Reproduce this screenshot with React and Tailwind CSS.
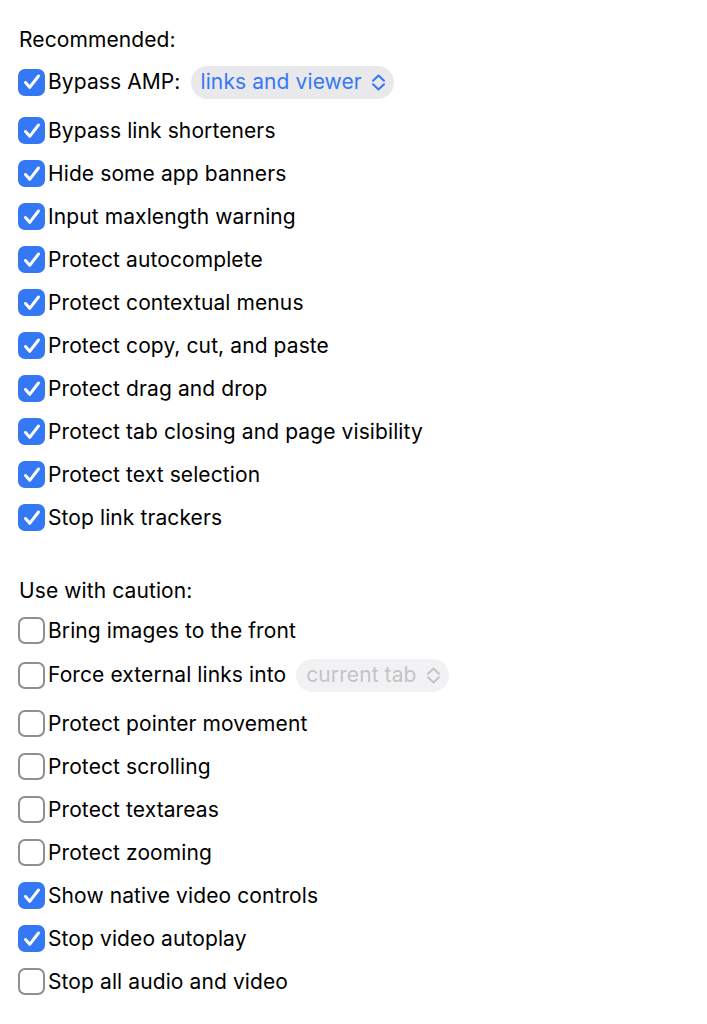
import React from 'react';

const recommended = [
  'Bypass link shorteners',
  'Hide some app banners',
  'Input maxlength warning',
  'Protect autocomplete',
  'Protect contextual menus',
  'Protect copy, cut, and paste',
  'Protect drag and drop',
  'Protect tab closing and page visibility',
  'Protect text selection',
  'Stop link trackers',
];

const caution = [
  { label: 'Protect pointer movement', checked: false },
  { label: 'Protect scrolling', checked: false },
  { label: 'Protect textareas', checked: false },
  { label: 'Protect zooming', checked: false },
  { label: 'Show native video controls', checked: true },
  { label: 'Stop video autoplay', checked: true },
  { label: 'Stop all audio and video', checked: false },
];

function Box({ checked }) {
  if (checked) {
    return (
      <span className="flex h-[27px] w-[27px] shrink-0 items-center justify-center rounded-[7px] bg-[#3478f6]">
        <svg viewBox="0 0 24 24" className="h-[24px] w-[24px]" fill="none" stroke="white" strokeWidth="3" strokeLinecap="round" strokeLinejoin="round">
          <path d="M5.5 12.5l4.2 4.8L18.5 6" />
        </svg>
      </span>
    );
  }
  return <span className="h-[27px] w-[27px] shrink-0 rounded-[7px] border-2 border-[#8e8e93] bg-white" />;
}

function Chevrons({ className }) {
  return (
    <svg viewBox="0 0 15 17" className={className} fill="none" stroke="currentColor" strokeWidth="2" strokeLinecap="round" strokeLinejoin="round">
      <path d="M2 6.8L7.5 1.5 13 6.8" />
      <path d="M2 10.2L7.5 15.5 13 10.2" />
    </svg>
  );
}

function Row({ checked = true, children, className = 'h-[43px]' }) {
  return (
    <div className={`flex items-center gap-[3px] ${className}`}>
      <Box checked={checked} />
      {children}
    </div>
  );
}

export default function App() {
  return (
    <div
      className="min-h-[1024px] w-[707px] bg-white pl-[18px] pt-[22px] text-[21px] tracking-[0.1px] text-black"
      style={{ fontFamily: 'Inter, "Noto Sans", sans-serif' }}
    >
      {/* Recommended */}
      <div className="flex h-[36px] items-center pl-px">Recommended:</div>
      <Row className="h-[48px]">
        <span>Bypass AMP:</span>
        <span className="ml-[7px] flex h-[33px] items-center gap-[9px] rounded-full bg-[#e9e9eb] pl-[10px] pr-[8px] text-[#3478f6]">
          links and viewer
          <Chevrons className="h-[17px] w-[15px]" />
        </span>
      </Row>
      <div className="mt-[3px]">
        {recommended.map(label => (
          <Row key={label}>
            <span>{label}</span>
          </Row>
        ))}
      </div>

      {/* Use with caution */}
      <div className="mt-[34px] flex h-[36px] items-center pl-px">Use with caution:</div>
      <Row checked={false}>
        <span>Bring images to the front</span>
      </Row>
      <Row checked={false} className="h-[46px]">
        <span>Force external links into</span>
        <span className="ml-[7px] flex h-[33px] items-center gap-[9px] rounded-full bg-[#f2f2f4] pl-[10px] pr-[8px] text-[#c4c4c7]">
          current tab
          <Chevrons className="h-[17px] w-[15px]" />
        </span>
      </Row>
      <div className="mt-[4px]">
        {caution.map(item => (
          <Row key={item.label} checked={item.checked}>
            <span>{item.label}</span>
          </Row>
        ))}
      </div>
    </div>
  );
}
